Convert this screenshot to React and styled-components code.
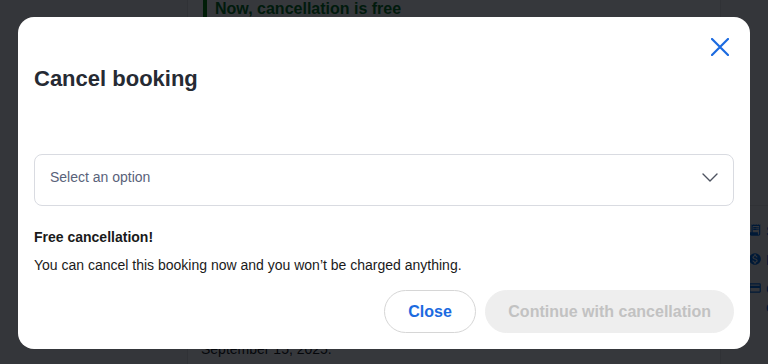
import React from "react";
import styled, { createGlobalStyle } from "styled-components";
import { MdReceiptLong, MdMonetizationOn, MdCreditCard } from "react-icons/md";

const GlobalStyle = createGlobalStyle`
  html, body {
    margin: 0;
    padding: 0;
    height: 364px;
    overflow: hidden;
    font-family: "Liberation Sans", Arial, sans-serif;
    background: #ffffff;
  }
  * { box-sizing: border-box; }
`;

/* page behind the dialog */
const Page = styled.div`
  display: flex;
  width: 768px;
  height: 364px;
  background: #f5f5f5;
  overflow: hidden;
`;

const LeftColumn = styled.div`
  width: 188px;
  flex-shrink: 0;
  border-right: 1px solid #e3e3e3;
`;

const MainColumn = styled.main`
  width: 533px;
  flex-shrink: 0;
  background: #ffffff;
  border-right: 1px solid #e3e3e3;
  display: flex;
  flex-direction: column;
`;

const Notice = styled.div`
  margin-left: 15px;
  border-left: 4px solid #008009;
  padding: 0 0 0 8px;
  height: 17px;
  display: flex;
  align-items: center;
  font-size: 16px;
  font-weight: 700;
  color: #04751f;
`;

const DateLine = styled.p`
  margin: 324px 0 0 13px;
  font-size: 14px;
  color: #1a1a1a;
`;

const Sidebar = styled.aside`
  flex: 1;
  min-width: 0;
  padding-top: 205px;
`;

const SideList = styled.div`
  border-top: 1px solid #e3e3e3;
  padding: 16px 0 0 27px;
  display: flex;
  flex-direction: column;
  gap: 11px;
`;

const SideItem = styled.div`
  display: flex;
  gap: 4px;
  font-size: 15px;
  color: #006ce4;
  line-height: 18px;
  white-space: nowrap;
  svg { flex-shrink: 0; margin-top: 1px; }
`;

/* dialog */
const Overlay = styled.div`
  position: fixed;
  inset: 0;
  background: rgba(0, 3, 8, 0.79);
  padding: 17px 18px;
  display: flex;
  align-items: flex-start;
`;

const Dialog = styled.div`
  width: 732px;
  background: #ffffff;
  border-radius: 16px;
  padding: 16px;
  display: flex;
  flex-direction: column;
`;

const HeaderRow = styled.div`
  display: flex;
  justify-content: flex-end;
`;

const IconButton = styled.button`
  width: 28px;
  height: 28px;
  padding: 0;
  border: none;
  background: transparent;
  display: flex;
  align-items: center;
  justify-content: center;
  cursor: pointer;
`;

const Title = styled.h2`
  margin: 4px 0 0;
  font-size: 22px;
  line-height: 28px;
  font-weight: 700;
  color: #262a33;
`;

const SelectBox = styled.div`
  margin-top: 61px;
  height: 52px;
  border: 1px solid #d9dbe1;
  border-radius: 8px;
  padding: 0 15px 6px 15px;
  display: flex;
  align-items: center;
  justify-content: space-between;
  font-size: 14px;
  color: #59627a;
`;

const Text = styled.p`
  margin: ${(p) => p.$top || 0}px 0 0;
  font-size: 14px;
  line-height: 20px;
  font-weight: ${(p) => (p.$bold ? 700 : 400)};
  color: #1a1a1a;
`;

const Actions = styled.div`
  margin-top: 15px;
  display: flex;
  justify-content: flex-end;
  gap: 9px;
`;

const Button = styled.button`
  height: 43px;
  padding: 0 ${(p) => (p.$primary ? 22 : 23.5)}px;
  border-radius: 999px;
  font-family: "Liberation Sans", Arial, sans-serif;
  font-size: 16px;
  font-weight: 700;
  border: 1px solid ${(p) => (p.$primary ? "#eeeeee" : "#d6d6d6")};
  background: ${(p) => (p.$primary ? "#eeeeee" : "#ffffff")};
  color: ${(p) => (p.$primary ? "#c2c2c2" : "#1b6ae0")};
  cursor: ${(p) => (p.$primary ? "default" : "pointer")};
`;

const CloseIcon = () => (
  <svg width="18" height="18" viewBox="0 0 18 18" fill="none">
    <path d="M1 1 L17 17 M17 1 L1 17" stroke="#1b6ae0" strokeWidth="2.2" strokeLinecap="round" />
  </svg>
);

const Chevron = () => (
  <svg width="16" height="9" viewBox="0 0 16 9" fill="none">
    <path d="M1 1 L8 8 L15 1" stroke="#4d5360" strokeWidth="1.4" strokeLinecap="round" strokeLinejoin="round" />
  </svg>
);

export default function App() {
  return (
    <>
      <GlobalStyle />
      <Page>
        <LeftColumn />
        <MainColumn>
          <Notice>Now, cancellation is free</Notice>
          <DateLine>September 15, 2025.</DateLine>
        </MainColumn>
        <Sidebar>
          <SideList>
            <SideItem><MdReceiptLong size={14} />S</SideItem>
            <SideItem><MdMonetizationOn size={14} />P</SideItem>
            <SideItem><MdCreditCard size={14} /><span>C<br />c</span></SideItem>
          </SideList>
        </Sidebar>
      </Page>
      <Overlay>
        <Dialog role="dialog" aria-label="Cancel booking">
          <HeaderRow>
            <IconButton aria-label="Close"><CloseIcon /></IconButton>
          </HeaderRow>
          <Title>Cancel booking</Title>
          <SelectBox>
            <span>Select an option</span>
            <Chevron />
          </SelectBox>
          <Text $bold $top={21}>Free cancellation!</Text>
          <Text $top={8}>You can cancel this booking now and you won’t be charged anything.</Text>
          <Actions>
            <Button>Close</Button>
            <Button $primary disabled>Continue with cancellation</Button>
          </Actions>
        </Dialog>
      </Overlay>
    </>
  );
}
